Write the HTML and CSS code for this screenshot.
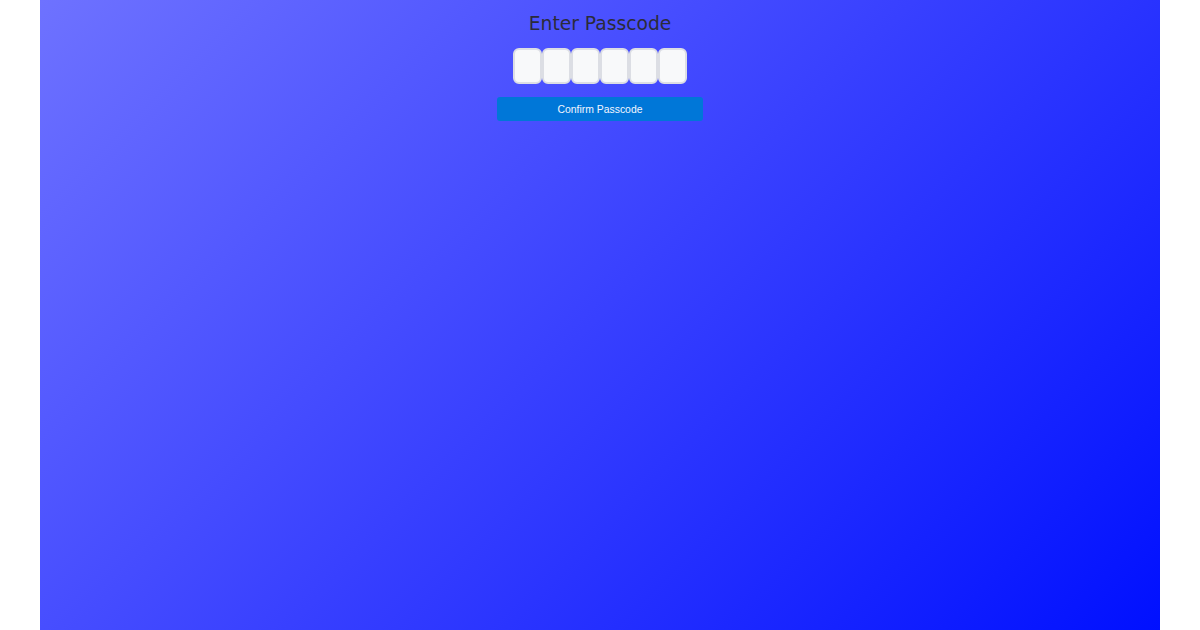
FILE: index.html
```html
<!DOCTYPE html>
<html lang="en">
<head>
<meta charset="utf-8">
<title>Enter Passcode</title>
<link rel="stylesheet" href="styles.css">
</head>
<body>
  <main class="screen">
    <section class="passcode">
      <h1 class="passcode-title">Enter Passcode</h1>
      <div class="digits">
        <input class="digit" type="password" maxlength="1" inputmode="numeric">
        <input class="digit" type="password" maxlength="1" inputmode="numeric">
        <input class="digit" type="password" maxlength="1" inputmode="numeric">
        <input class="digit" type="password" maxlength="1" inputmode="numeric">
        <input class="digit" type="password" maxlength="1" inputmode="numeric">
        <input class="digit" type="password" maxlength="1" inputmode="numeric">
      </div>
      <button class="confirm" type="button">Confirm Passcode</button>
    </section>
  </main>
</body>
</html>
```

FILE: styles.css
```css
* {
  box-sizing: border-box;
}

html,
body {
  margin: 0;
  height: 100%;
  background: #ffffff;
}

body {
  padding: 0 40px;
  font-family: "DejaVu Sans", sans-serif;
}

.screen {
  min-height: 630px;
  background: linear-gradient(135deg, #6e72ff 0%, #3840ff 50%, #0010ff 100%);
}

.passcode {
  display: flex;
  flex-direction: column;
  align-items: center;
  padding-top: 13px;
}

.passcode-title {
  margin: 0;
  font-size: 18.7px;
  line-height: 22px;
  font-weight: 400;
  color: #2b2b3a;
}

.digits {
  display: flex;
  margin-top: 13px;
}

.digit {
  width: 29px;
  height: 36px;
  margin: 0;
  border: 2px solid #dcdee4;
  border-radius: 6px;
  background: #f8f9fa;
  text-align: center;
  font-size: 16px;
}

.confirm {
  margin-top: 13px;
  width: 206px;
  height: 24px;
  border: 0;
  border-radius: 3px;
  background: #0077d8;
  color: #f2f6ff;
  font-family: "Liberation Sans", Arial, sans-serif;
  font-size: 10.4px;
  padding: 0;
}
```
